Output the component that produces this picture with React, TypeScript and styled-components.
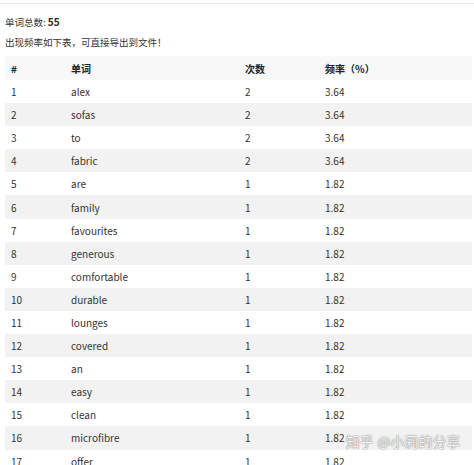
import React from "react";
import styled, { createGlobalStyle } from "styled-components";

const Global = createGlobalStyle`
  html, body { margin: 0; padding: 0; background: #fff; }
  body { font-family: "Noto Sans CJK SC", "Noto Sans", sans-serif; color: #222; overflow: hidden; }
`;

const Page = styled.div`
  position: relative;
  width: 474px;
  height: 465px;
  overflow: hidden;
  padding: 0 2px 0 5px;
  box-sizing: border-box;
`;

const TopRule = styled.div`
  height: 3px;
  margin: 0 -2px 0 -5px;
  border-bottom: 1px solid #e6e6e6;
`;

const Line = styled.div<{ $mt: number }>`
  margin-top: ${(p) => p.$mt}px;
  font-size: 9.5px;
  line-height: 14px;
  color: #333;
  b { font-weight: 700; color: #222; font-size: 10px; }
`;

const Table = styled.div`
  margin-top: 7px;
  display: flex;
  flex-direction: column;
`;

const Row = styled.div<{ $bg: string; $h: number }>`
  display: grid;
  grid-template-columns: 60px 174px 80px 1fr;
  height: ${(p) => p.$h}px;
  align-items: center;
  background: ${(p) => p.$bg};
  font-size: 10px;
  color: #333;
  padding-left: 6px;
`;

const Head = styled(Row)`
  font-weight: 700;
  color: #222;
`;

const Watermark = styled.div`
  position: absolute;
  left: 346px;
  top: 431px;
  font-size: 13.5px;
  color: rgba(255, 255, 255, 0.92);
  text-shadow: 0 0 1px #777, 0 0 2px #999;
  letter-spacing: 0.5px;
`;

const rows: [string, string, string][] = [
  ["alex", "2", "3.64"],
  ["sofas", "2", "3.64"],
  ["to", "2", "3.64"],
  ["fabric", "2", "3.64"],
  ["are", "1", "1.82"],
  ["family", "1", "1.82"],
  ["favourites", "1", "1.82"],
  ["generous", "1", "1.82"],
  ["comfortable", "1", "1.82"],
  ["durable", "1", "1.82"],
  ["lounges", "1", "1.82"],
  ["covered", "1", "1.82"],
  ["an", "1", "1.82"],
  ["easy", "1", "1.82"],
  ["clean", "1", "1.82"],
  ["microfibre", "1", "1.82"],
  ["offer", "1", "1.82"],
];

export default function App() {
  return (
    <>
      <Global />
      <Page>
        <TopRule />
        <Line $mt={11}>
          单词总数: <b>55</b>
        </Line>
        <Line $mt={6}>出现频率如下表，可直接导出到文件！</Line>
        <Table>
          <Head $bg="#f8f8f8" $h={24}>
            <span>#</span>
            <span>单词</span>
            <span>次数</span>
            <span>频率（%）</span>
          </Head>
          {rows.map((r, i) => (
            <Row key={i} $bg={i % 2 === 1 ? "#f2f2f2" : "#fff"} $h={23.1}>
              <span>{i + 1}</span>
              <span>{r[0]}</span>
              <span>{r[1]}</span>
              <span>{r[2]}</span>
            </Row>
          ))}
        </Table>
        <Watermark>知乎 @小莉的分享</Watermark>
      </Page>
    </>
  );
}
